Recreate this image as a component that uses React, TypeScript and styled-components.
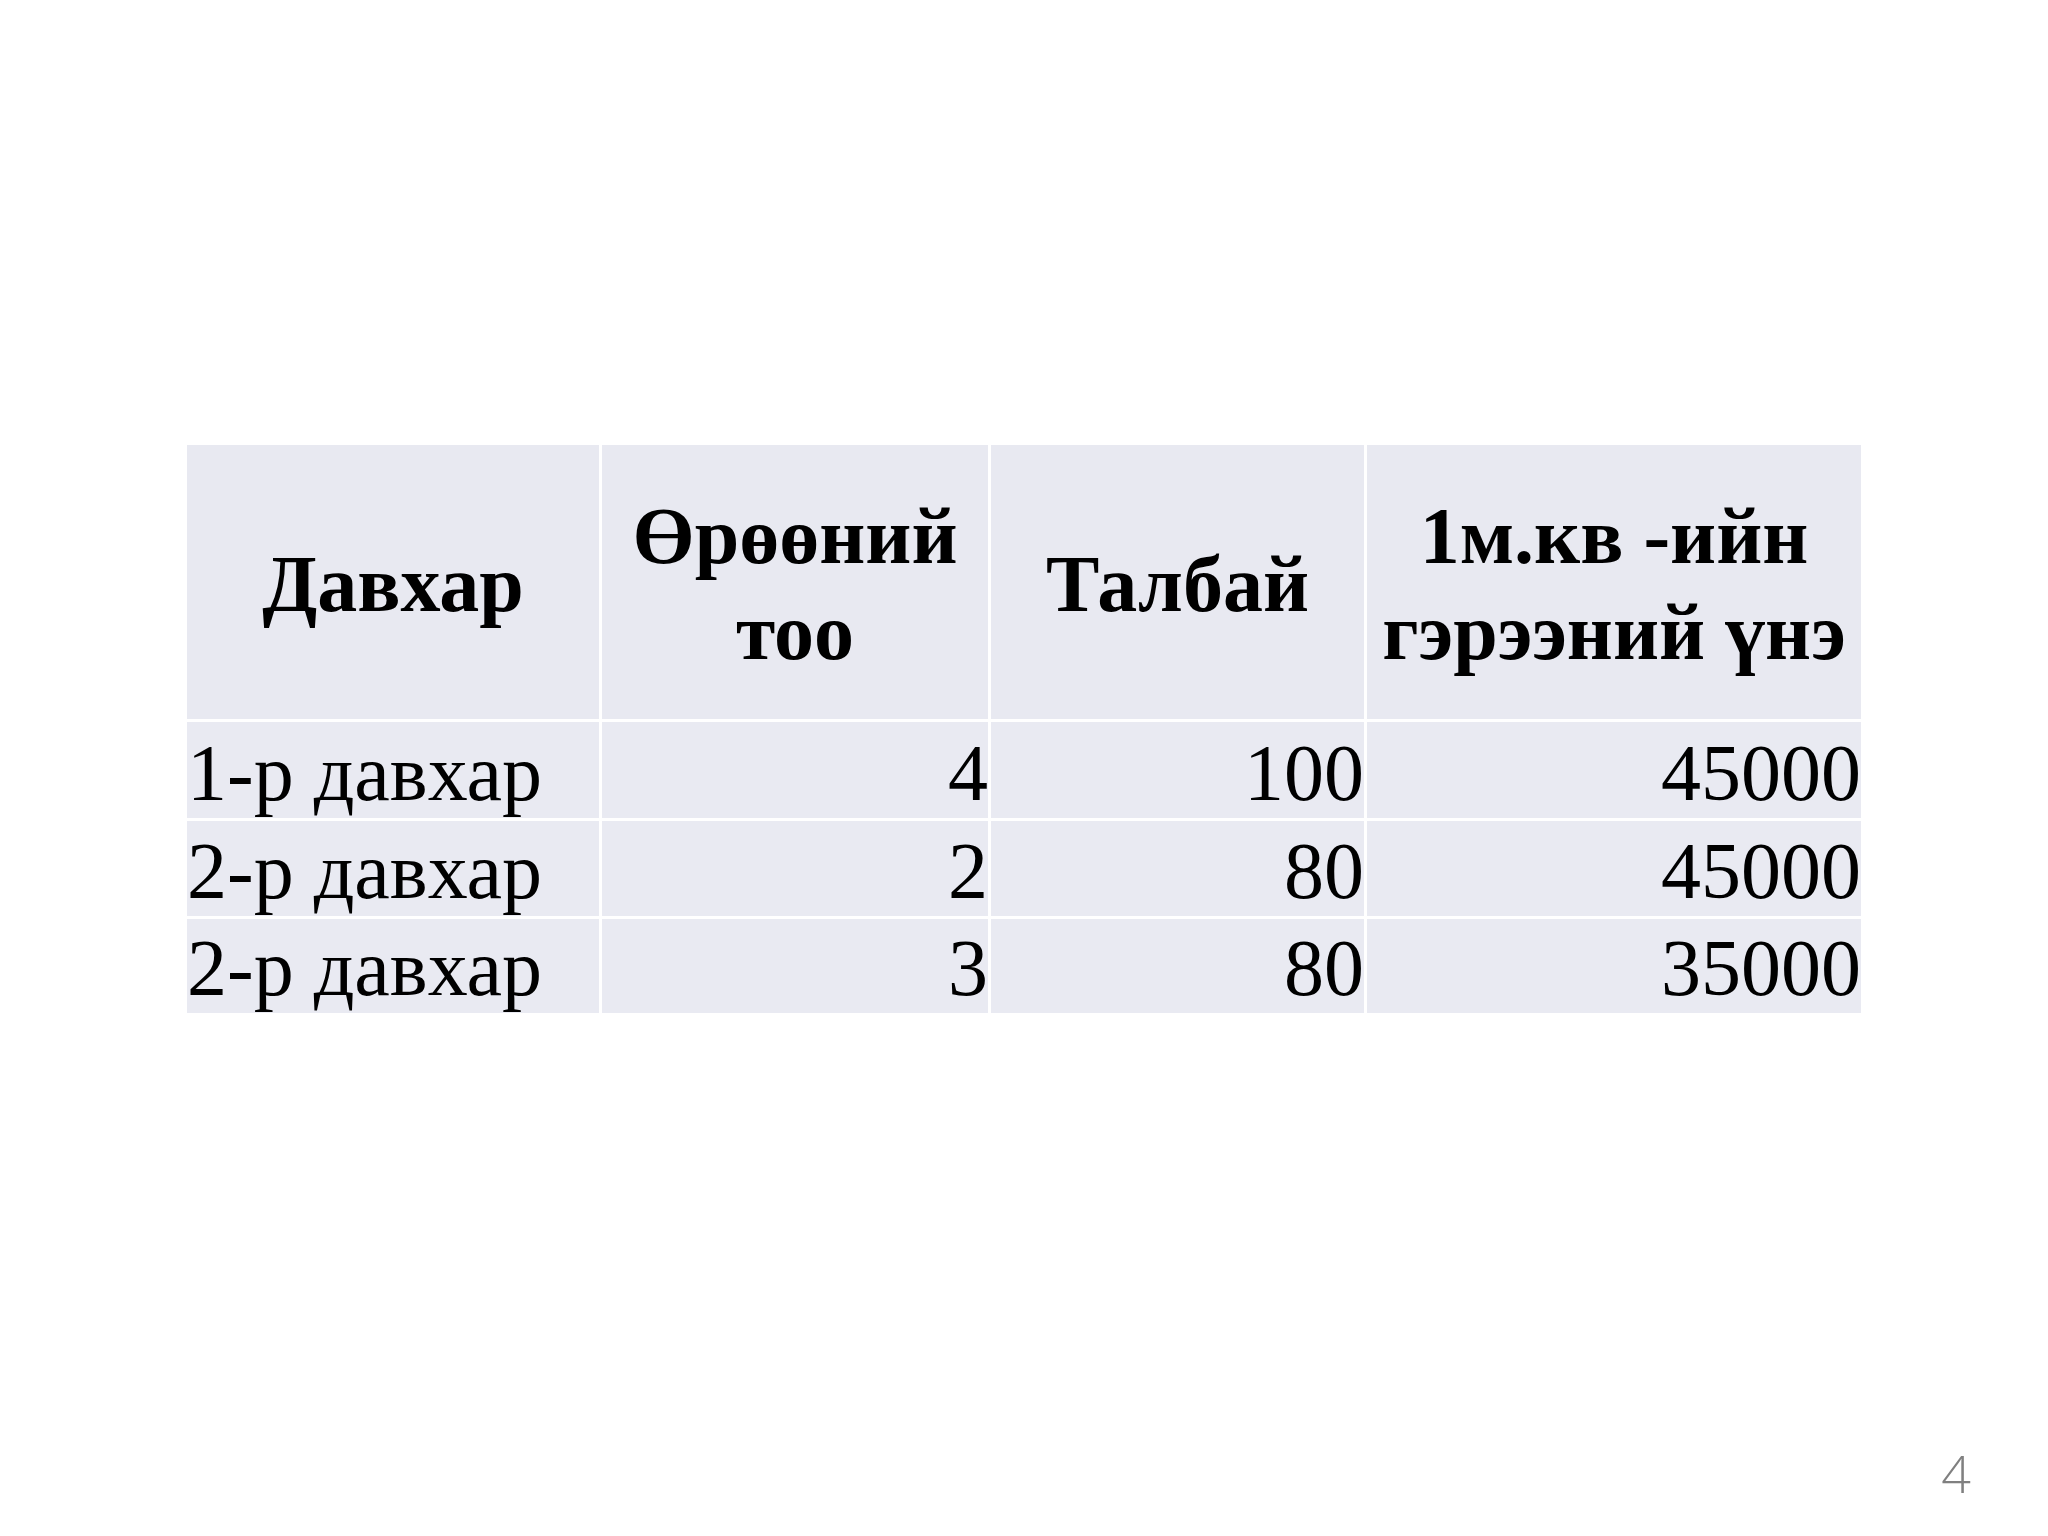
import styled, { createGlobalStyle } from "styled-components";

const GlobalStyle = createGlobalStyle`
  html, body {
    margin: 0;
    padding: 0;
    background: #ffffff;
  }
`;

const Slide = styled("div")`
  width: 2048px;
  height: 1536px;
  box-sizing: border-box;
  padding: 445px 187px 33px 187px;
  display: flex;
  flex-direction: column;
  font-family: "Liberation Serif", "Times New Roman", serif;
  color: #000000;
`;

const Table = styled("div")`
  display: grid;
  grid-template-columns: 412px 386px 373px 494px;
  grid-template-rows: 274px 96px 95px 94px;
  gap: 3px;
  width: 1674px;
`;

const HeadCell = styled("div")`
  background: #e8e9f1;
  display: flex;
  align-items: center;
  justify-content: center;
  text-align: center;
  font-weight: 700;
  font-size: 80px;
  line-height: 96px;
  padding-top: 4px;
`;

const BodyCell = styled("div")<{ $align: "left" | "right" }>`
  background: #e9eaf2;
  display: flex;
  align-items: flex-end;
  justify-content: ${(p) => (p.$align === "left" ? "flex-start" : "flex-end")};
  font-size: 80px;
  line-height: 96px;
  white-space: nowrap;
`;

const BodyText = styled("span")`
  display: block;
  transform: translateY(3px);
`;

const PageNumber = styled("div")`
  margin-top: auto;
  align-self: flex-end;
  margin-right: -110px;
  font-family: "Open Sans", "Liberation Sans", sans-serif;
  font-weight: 300;
  font-size: 52px;
  line-height: 60px;
  color: #808080;
`;

const headers = ["Давхар", "Өрөөний\nтоо", "Талбай", "1м.кв -ийн\nгэрээний үнэ"];

const rows = [
  ["1-р давхар", "4", "100", "45000"],
  ["2-р давхар", "2", "80", "45000"],
  ["2-р давхар", "3", "80", "35000"],
];

export default function App() {
  return (
    <>
      <GlobalStyle />
      <Slide>
        <Table>
          {headers.map((h) => (
            <HeadCell key={h}>
              <div>
                {h.split("\n").map((line) => (
                  <div key={line}>{line}</div>
                ))}
              </div>
            </HeadCell>
          ))}
          {rows.map((row, i) =>
            row.map((value, j) => (
              <BodyCell key={`${i}-${j}`} $align={j === 0 ? "left" : "right"}>
                <BodyText>{value}</BodyText>
              </BodyCell>
            ))
          )}
        </Table>
        <PageNumber>4</PageNumber>
      </Slide>
    </>
  );
}
